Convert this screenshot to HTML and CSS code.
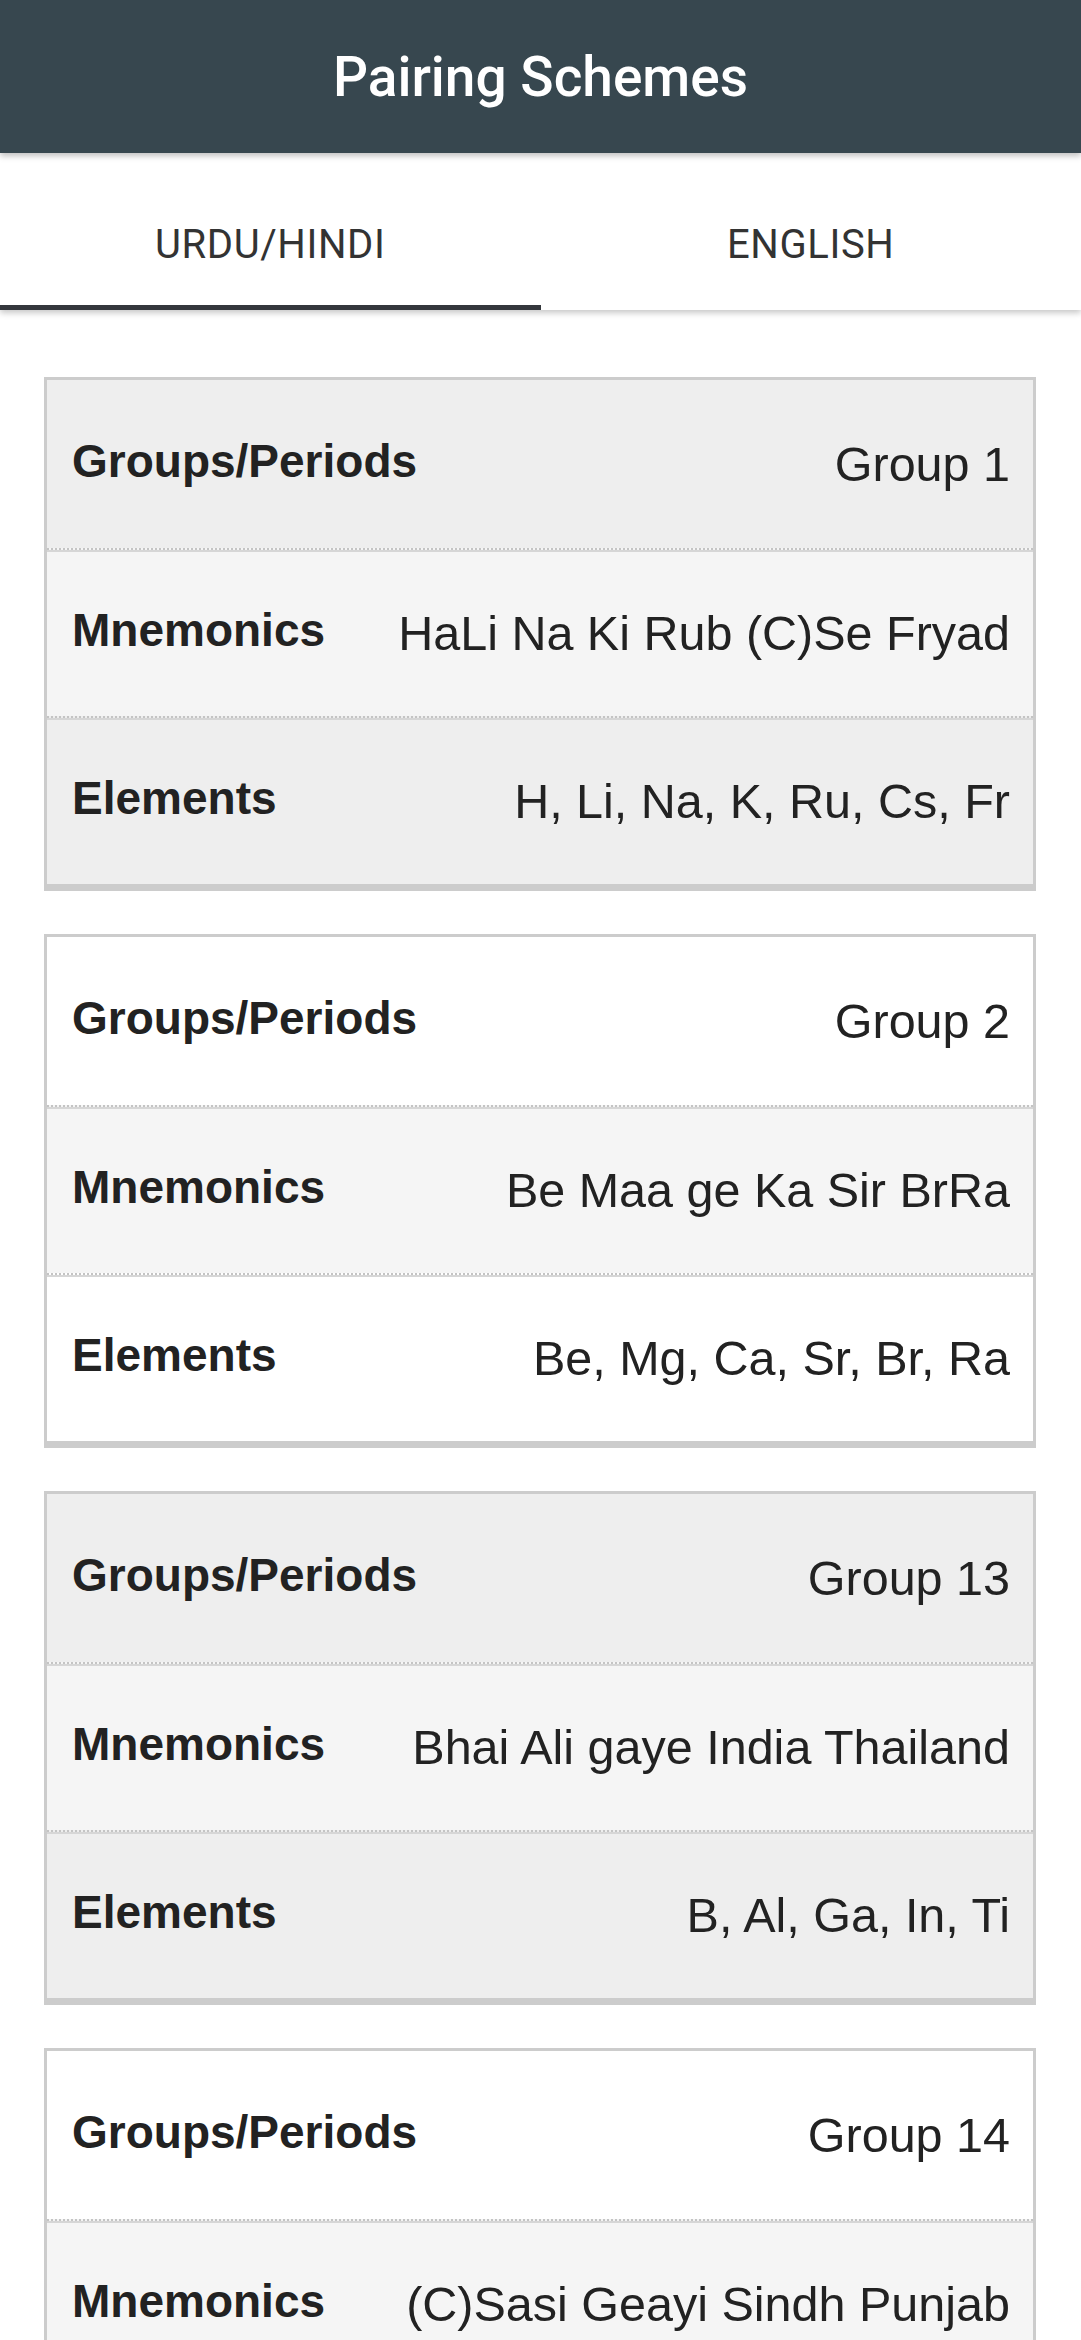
FILE: index.html
```html
<!DOCTYPE html>
<html lang="en">
<head>
  <meta charset="UTF-8" />
  <meta name="viewport" content="width=device-width, initial-scale=1.0"/>
  <title>Pairing Schemes</title>
  <link rel="stylesheet" href="styles.css">
</head>
<body>
  <header class="toolbar">
    <h1 class="title">Pairing Schemes</h1>
  </header>

  <nav class="tabs">
    <div class="tab active">URDU/HINDI</div>
    <div class="tab">ENGLISH</div>
  </nav>

  <main class="list">
    <section class="card shaded">
      <div class="row"><span class="label">Groups/Periods</span><span class="value">Group 1</span></div>
      <div class="row"><span class="label">Mnemonics</span><span class="value">HaLi Na Ki Rub (C)Se Fryad</span></div>
      <div class="row"><span class="label">Elements</span><span class="value">H, Li, Na, K, Ru, Cs, Fr</span></div>
    </section>

    <section class="card">
      <div class="row"><span class="label">Groups/Periods</span><span class="value">Group 2</span></div>
      <div class="row"><span class="label">Mnemonics</span><span class="value">Be Maa ge Ka Sir BrRa</span></div>
      <div class="row"><span class="label">Elements</span><span class="value">Be, Mg, Ca, Sr, Br, Ra</span></div>
    </section>

    <section class="card shaded">
      <div class="row"><span class="label">Groups/Periods</span><span class="value">Group 13</span></div>
      <div class="row"><span class="label">Mnemonics</span><span class="value">Bhai Ali gaye India Thailand</span></div>
      <div class="row"><span class="label">Elements</span><span class="value">B, Al, Ga, In, Ti</span></div>
    </section>

    <section class="card">
      <div class="row"><span class="label">Groups/Periods</span><span class="value">Group 14</span></div>
      <div class="row"><span class="label">Mnemonics</span><span class="value">(C)Sasi Geayi Sindh Punjab</span></div>
      <div class="row"><span class="label">Elements</span><span class="value">C, Si, Ge, Sn, Pb</span></div>
    </section>
  </main>
</body>
</html>
```

FILE: styles.css
```css
* {
  box-sizing: border-box;
}

html, body {
  margin: 0;
  padding: 0;
  background: #ffffff;
}

body {
  font-family: "Liberation Sans", Arial, sans-serif;
  color: #222222;
}

.toolbar {
  position: relative;
  z-index: 2;
  height: 153px;
  background: #37474f;
  display: flex;
  justify-content: center;
  align-items: center;
  box-shadow: 0 3px 6px rgba(0,0,0,0.25);
}

.title {
  margin: 0;
  font-family: Roboto, "Noto Sans", sans-serif;
  font-weight: 500;
  font-size: 55px;
  color: #ffffff;
}

.tabs {
  position: relative;
  z-index: 1;
  display: flex;
  height: 157px;
  background: #ffffff;
  box-shadow: 0 3px 6px rgba(0,0,0,0.22);
}

.tab {
  flex: 1;
  display: flex;
  justify-content: center;
  align-items: center;
  padding-top: 30px;
  border-bottom: 5px solid transparent;
  font-family: Roboto, "Noto Sans", sans-serif;
  font-size: 40px;
  letter-spacing: 0.6px;
  color: #333333;
}

.tab.active {
  border-bottom-color: #34373c;
}

.list {
  display: flex;
  flex-direction: column;
  gap: 43px;
  padding: 67px 45px 0 44px;
}

.card {
  border: 3px solid #cccccc;
  border-bottom-width: 7px;
  background: #ffffff;
}

.row {
  height: 168px;
  display: flex;
  justify-content: space-between;
  align-items: center;
  padding: 0 23px 0 25px;
  background: #ffffff;
}

.row + .row {
  border-top: 2px dotted #c4c4c4;
  box-shadow: inset 0 2px 0 #d6d6d6;
}

.row:nth-child(2) {
  background: #f5f5f5;
}

.card.shaded .row {
  background: #eeeeee;
}

.card.shaded .row:nth-child(2) {
  background: #f5f5f5;
}

.label {
  font-weight: bold;
  font-size: 46px;
  padding-bottom: 6px;
  white-space: nowrap;
}

.value {
  font-size: 48.5px;
  white-space: nowrap;
  text-align: right;
}
```
